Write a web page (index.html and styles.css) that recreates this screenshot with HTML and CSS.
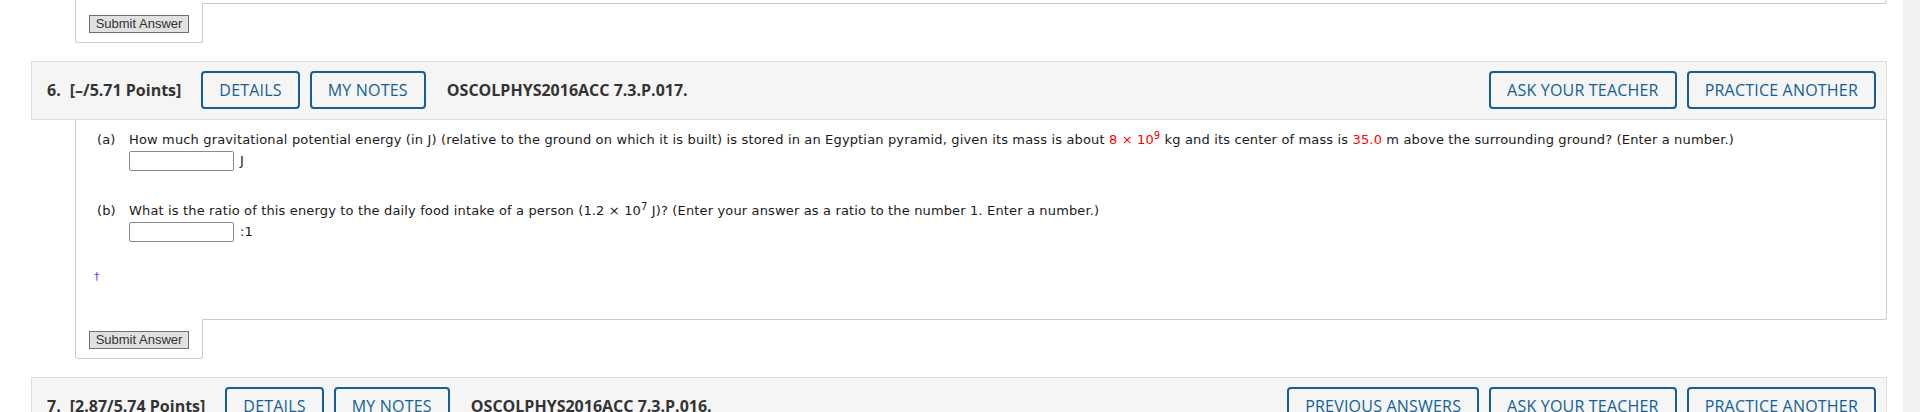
FILE: index.html
```html
<!DOCTYPE html>
<html lang="en">
<head>
  <meta charset="UTF-8">
  <meta name="viewport" content="width=device-width, initial-scale=1.0">
  <title>Assignment - Questions</title>
  <link rel="stylesheet" href="styles.css">
</head>
<body>

  <div class="page">
    <main class="content">

      <!-- Tail of question 5 -->
      <div class="question question-tail">
        <div class="q-body q-body-tail"></div>
        <div class="submit-tab">
          <button class="submit-btn">Submit Answer</button>
        </div>
      </div>

      <!-- Question 6 -->
      <section class="question">
        <div class="q-head">
          <span class="q-num">6.</span>
          <span class="q-points">[&ndash;/5.71 Points]</span>
          <div class="q-actions">
            <button class="q-btn">Details</button>
            <button class="q-btn">My Notes</button>
          </div>
          <span class="q-code">OSCOLPHYS2016ACC 7.3.P.017.</span>
          <div class="q-actions q-actions-right">
            <button class="q-btn">Ask Your Teacher</button>
            <button class="q-btn">Practice Another</button>
          </div>
        </div>

        <div class="q-body">
          <div class="parts">
            <div class="part">
              <span class="part-label">(a)</span>
              <div class="part-main">
                <p class="prompt">How much gravitational potential energy (in J) (relative to the ground on which it is built) is stored in an Egyptian pyramid, given its mass is about <span class="given">8 &times; 10<sup>9</sup></span> kg and its center of mass is <span class="given">35.0</span> m above the surrounding ground? (Enter a number.)</p>
                <div class="answer">
                  <input class="answer-box" type="text">
                  <span class="unit">J</span>
                </div>
              </div>
            </div>
            <div class="part">
              <span class="part-label">(b)</span>
              <div class="part-main">
                <p class="prompt">What is the ratio of this energy to the daily food intake of a person (1.2 &times; 10<sup>7</sup> J)? (Enter your answer as a ratio to the number 1. Enter a number.)</p>
                <div class="answer">
                  <input class="answer-box" type="text">
                  <span class="unit">:1</span>
                </div>
              </div>
            </div>
          </div>
          <p class="footnote">&dagger;</p>
        </div>

        <div class="submit-tab">
          <button class="submit-btn">Submit Answer</button>
        </div>
      </section>

      <!-- Question 7 -->
      <section class="question">
        <div class="q-head">
          <span class="q-num">7.</span>
          <span class="q-points">[2.87/5.74 Points]</span>
          <div class="q-actions">
            <button class="q-btn">Details</button>
            <button class="q-btn">My Notes</button>
          </div>
          <span class="q-code">OSCOLPHYS2016ACC 7.3.P.016.</span>
          <div class="q-actions q-actions-right">
            <button class="q-btn">Previous Answers</button>
            <button class="q-btn">Ask Your Teacher</button>
            <button class="q-btn">Practice Another</button>
          </div>
        </div>
      </section>

    </main>
    <div class="scrollbar"></div>
  </div>

</body>
</html>
```

FILE: styles.css
```css
body {
  margin: 0;
  padding: 0;
  background: #fff;
  color: #222;
  font-family: 'Open Sans', sans-serif;
}

.page {
  display: flex;
  height: 100vh;
  overflow: hidden;
}

.content {
  flex: 1;
  padding: 0 16px 0 31px;
}

.scrollbar {
  width: 17px;
  background-color: #f1f1f1;
}

/* Question header */
.question {
  margin-top: 18px;
}

.question-tail {
  margin-top: 0;
}

.q-head {
  display: flex;
  align-items: center;
  background-color: #f5f5f5;
  border: 1px solid #ddd;
  padding: 9px 10px 10px 15px;
  color: #333;
  font-size: 16px;
  font-weight: 700;
}

.q-num {
  margin-right: 9px;
}

.q-actions {
  display: flex;
  gap: 10px;
  margin-left: 20px;
}

.q-actions-right {
  margin-left: auto;
}

.q-code {
  margin-left: 21px;
}

.q-btn {
  height: 38px;
  box-sizing: border-box;
  padding: 0 16px;
  background: transparent;
  border: 2px solid #135f96;
  border-radius: 4px;
  color: #135f96;
  font-family: 'Open Sans', sans-serif;
  font-size: 16px;
  letter-spacing: 0.2px;
  text-transform: uppercase;
  cursor: pointer;
}

/* Question body */
.q-body {
  margin-left: 44px;
  border: 1px solid #ccc;
  border-top: none;
  border-bottom-right-radius: 3px;
  padding: 12px 21px 35px 21px;
  font-family: 'DejaVu Sans', Verdana, sans-serif;
  font-size: 13px;
  letter-spacing: 0.15px;
  line-height: 16px;
  color: #1a1a1a;
}

.q-body-tail {
  height: 3px;
  padding: 0;
}

.parts {
  display: flex;
  flex-direction: column;
  gap: 32px;
}

.part {
  display: grid;
  grid-template-columns: 32px 1fr;
}

.prompt {
  margin: 0;
}

.given {
  color: #f00;
}

sup {
  font-size: 10px;
  line-height: 0;
  vertical-align: 5px;
}

.answer {
  display: flex;
  align-items: center;
  margin-top: 3px;
}

.answer-box {
  width: 105px;
  height: 20px;
  box-sizing: border-box;
  margin: 0;
  border: 1px solid #8a8a8a;
  border-radius: 2px;
  background: #fff;
}

.unit {
  margin-left: 6px;
}

.footnote {
  margin: 28px 0 0 -3px;
  font-size: 11px;
  line-height: 14px;
  color: #4646ff;
}

/* Submit tab under the body */
.submit-tab {
  width: fit-content;
  margin: -1px 0 0 44px;
  padding: 12px 13px 9px 13px;
  background: #fff;
  border: 1px solid #ccc;
  border-top: none;
  border-radius: 0 0 3px 3px;
}

.submit-btn {
  display: block;
  width: 100px;
  height: 18px;
  box-sizing: border-box;
  padding: 0;
  background-color: #e1e1e1;
  border: 1px solid #6f6f6f;
  color: #333;
  font-family: 'Liberation Sans', Arial, sans-serif;
  font-size: 13px;
  line-height: 16px;
}
```
